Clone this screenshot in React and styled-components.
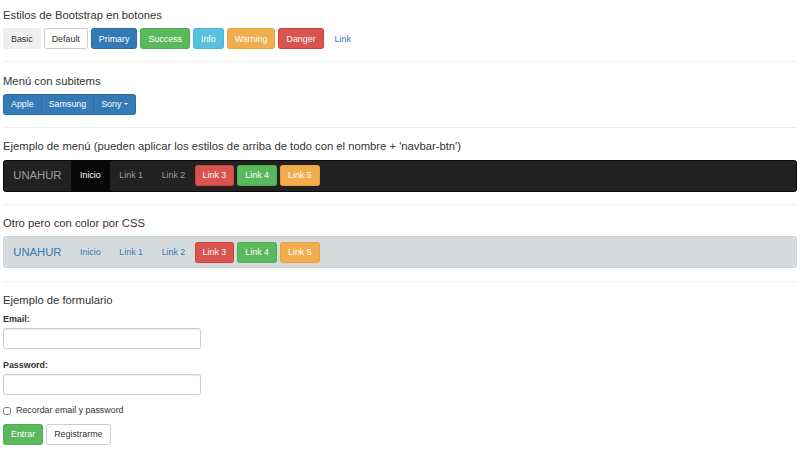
import React from 'react';
import styled, { createGlobalStyle, css } from 'styled-components';

const GlobalStyle = createGlobalStyle`
  html, body {
    margin: 0;
    padding: 0;
    background: #fff;
  }
  body {
    font-family: "Liberation Sans", Arial, Helvetica, sans-serif;
    font-size: 8.9px;
    line-height: 12.36px;
    color: #333;
  }
  * {
    box-sizing: border-box;
  }
`;

const Page = styled.div`
  padding: 9px 3px 0;
`;

const Heading = styled.h4`
  margin: 0 0 7px;
  font-size: 11.25px;
  line-height: 12.3px;
  font-weight: 500;
  color: #333;
`;

const Rule = styled.hr`
  margin: 12.2px 0;
  border: 0;
  border-top: 1px solid #eee;
`;

const variants = {
  basic: css`
    background: #efefef;
    border-color: #efefef;
    color: #333;
  `,
  default: css`
    background: #fff;
    border-color: #ccc;
    color: #333;
  `,
  primary: css`
    background: #337ab7;
    border-color: #2e6da4;
    color: #fff;
  `,
  success: css`
    background: #5cb85c;
    border-color: #4cae4c;
    color: #fff;
  `,
  info: css`
    background: #5bc0de;
    border-color: #46b8da;
    color: #fff;
  `,
  warning: css`
    background: #f0ad4e;
    border-color: #eea236;
    color: #fff;
  `,
  danger: css`
    background: #d9534f;
    border-color: #d43f3a;
    color: #fff;
  `,
  link: css`
    background: transparent;
    border-color: transparent;
    color: #337ab7;
  `,
};

const Button = styled.button`
  display: inline-flex;
  align-items: center;
  height: 21px;
  padding: 0 7px;
  font-family: inherit;
  font-size: 8.9px;
  line-height: 12.36px;
  border: 1px solid transparent;
  border-radius: 2.5px;
  white-space: nowrap;
  cursor: pointer;
  ${(p) => variants[p.$variant || 'default']}
`;

const ButtonRow = styled.div`
  display: flex;
  gap: 3px;
  align-items: center;
`;

const Group = styled.div`
  display: inline-flex;

  & > ${Button} {
    border-radius: 0;
    margin-left: -1px;
  }
  & > ${Button}:first-child {
    margin-left: 0;
    border-radius: 2.5px 0 0 2.5px;
  }
  & > ${Button}:last-child {
    border-radius: 0 2.5px 2.5px 0;
  }
`;

const Caret = styled.span`
  display: inline-block;
  width: 0;
  height: 0;
  margin-left: 2.5px;
  border-top: 2.6px solid currentColor;
  border-left: 2.6px solid transparent;
  border-right: 2.6px solid transparent;
`;

const Navbar = styled.nav`
  display: flex;
  align-items: stretch;
  height: 32px;
  margin-bottom: 12.2px;
  border: 1px solid ${(p) => (p.$dark ? '#080808' : '#cdd4d5')};
  border-radius: 2.5px;
  background: ${(p) => (p.$dark ? '#222' : '#d5dbdc')};
`;

const Brand = styled.a`
  display: flex;
  align-items: center;
  padding: 0 9.3px;
  font-size: 11.25px;
  color: ${(p) => (p.$dark ? '#9d9d9d' : '#337ab7')};
  text-decoration: none;
`;

const NavLink = styled.a`
  display: flex;
  align-items: center;
  padding: 0 9.3px;
  font-size: 8.9px;
  text-decoration: none;
  color: ${(p) => (p.$dark ? (p.$active ? '#fff' : '#9d9d9d') : '#337ab7')};
  background: ${(p) => (p.$dark && p.$active ? '#080808' : 'transparent')};
`;

const NavButtons = styled.div`
  display: flex;
  align-items: center;
  gap: 3px;
`;

const FormGroup = styled.div`
  margin-bottom: 9.3px;
`;

const Label = styled.label`
  display: block;
  margin-bottom: 3.1px;
  font-weight: bold;
`;

const Input = styled.input`
  display: block;
  width: 198px;
  height: 21px;
  padding: 3.7px 7.4px;
  font-family: inherit;
  font-size: 8.9px;
  border: 1px solid #ccc;
  border-radius: 2.5px;
  box-shadow: inset 0 1px 1px rgba(0, 0, 0, 0.075);
  background: #fff;
`;

const CheckRow = styled.label`
  display: flex;
  align-items: center;
  margin-bottom: 7px;
  color: #333;
`;

const Check = styled.input`
  width: 8px;
  height: 8px;
  margin: 0 5px 0 0;
`;

function Menu({ dark }) {
  return (
    <Navbar $dark={dark}>
      <Brand $dark={dark}>UNAHUR</Brand>
      <NavLink $dark={dark} $active>Inicio</NavLink>
      <NavLink $dark={dark}>Link 1</NavLink>
      <NavLink $dark={dark}>Link 2</NavLink>
      <NavButtons>
        <Button $variant="danger">Link 3</Button>
        <Button $variant="success">Link 4</Button>
        <Button $variant="warning">Link 5</Button>
      </NavButtons>
    </Navbar>
  );
}

export default function App() {
  return (
    <Page>
      <GlobalStyle />
      <Heading>Estilos de Bootstrap en botones</Heading>
      <ButtonRow>
        <Button $variant="basic">Basic</Button>
        <Button $variant="default">Default</Button>
        <Button $variant="primary">Primary</Button>
        <Button $variant="success">Success</Button>
        <Button $variant="info">Info</Button>
        <Button $variant="warning">Warning</Button>
        <Button $variant="danger">Danger</Button>
        <Button $variant="link">Link</Button>
      </ButtonRow>
      <Rule />

      <Heading>Menú con subitems</Heading>
      <Group>
        <Button $variant="primary">Apple</Button>
        <Button $variant="primary">Samsung</Button>
        <Button $variant="primary">
          Sony <Caret />
        </Button>
      </Group>
      <Rule />

      <Heading>Ejemplo de menú (pueden aplicar los estilos de arriba de todo con el nombre + 'navbar-btn')</Heading>
      <Menu dark />
      <Rule />

      <Heading>Otro pero con color por CSS</Heading>
      <Menu />
      <Rule />

      <Heading>Ejemplo de formulario</Heading>
      <FormGroup>
        <Label>Email:</Label>
        <Input type="email" />
      </FormGroup>
      <FormGroup>
        <Label>Password:</Label>
        <Input type="password" />
      </FormGroup>
      <CheckRow>
        <Check type="checkbox" />
        Recordar email y password
      </CheckRow>
      <ButtonRow>
        <Button $variant="success">Entrar</Button>
        <Button $variant="default">Registrarme</Button>
      </ButtonRow>
    </Page>
  );
}
